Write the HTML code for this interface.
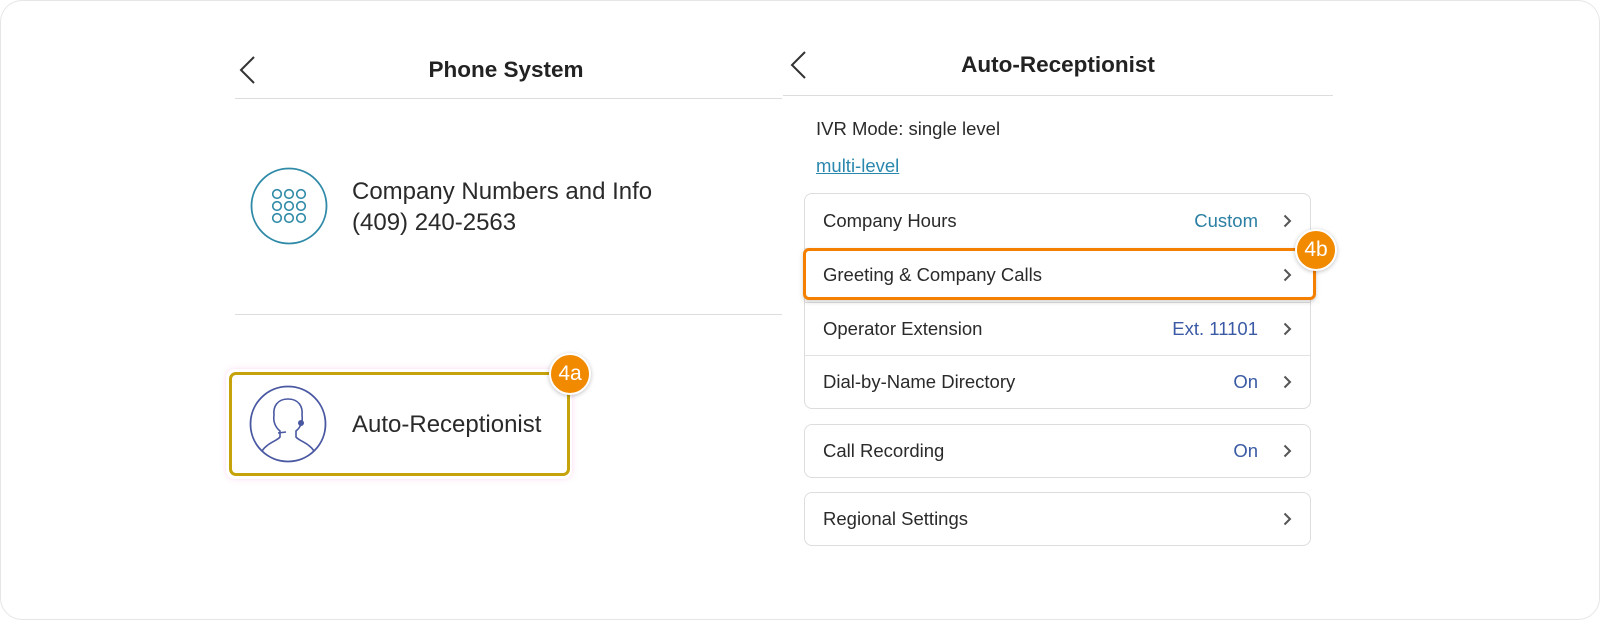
<!DOCTYPE html>
<html><head><meta charset="utf-8"><style>
*{margin:0;padding:0;box-sizing:border-box}
body{width:1600px;height:620px;background:#fff;font-family:"Liberation Sans",sans-serif;color:#222;position:relative;overflow:hidden}
.frame{position:absolute;left:0;top:0;width:1600px;height:620px;border:1px solid #e6e6e6;border-radius:22px}
.a{position:absolute}
.t{position:absolute;white-space:nowrap}
.hl{position:absolute;height:1px;background:#ddd}
.card{position:absolute;left:804px;width:507px;border:1px solid #ddd;border-radius:8px;background:#fff}
.row{position:absolute;left:0;right:0;height:54px}
.row .l{position:absolute;left:18px;top:50%;transform:translateY(-50%);font-size:18.5px;color:#2a2a2a}
.row .v{position:absolute;right:52px;top:50%;transform:translateY(-50%);font-size:18.5px;color:#2a7fa3}
.row svg{position:absolute;right:18px;top:50%;margin-top:-7px}
.sep{position:absolute;left:0;right:0;height:1px;background:#e2e2e2}
.badge{position:absolute;width:42px;height:42px;border-radius:50%;background:#f28a00;border:2px solid #fff;color:#fff;font-size:21px;text-align:center;line-height:38px;box-shadow:0 1px 4px rgba(0,0,0,.25)}
</style></head><body>
<div class="frame"></div>

<!-- Left panel -->
<svg class="a" style="left:236px;top:54px" width="22" height="32"><path d="M18 3 L5 16 L18 29" fill="none" stroke="#333" stroke-width="2"/></svg>
<div class="t" style="left:0;width:1012px;text-align:center;top:57px;font-size:22.5px;font-weight:bold;color:#222">Phone System</div>
<div class="hl" style="left:235px;top:98px;width:547px"></div>

<svg class="a" style="left:250px;top:167px" width="78" height="78">
<circle cx="39" cy="39" r="37.5" fill="none" stroke="#2f8aa8" stroke-width="1.8"/>
<g fill="none" stroke="#2f8aa8" stroke-width="1.6">
<circle cx="27" cy="27" r="4.3"/><circle cx="39" cy="27" r="4.3"/><circle cx="51" cy="27" r="4.3"/>
<circle cx="27" cy="39" r="4.3"/><circle cx="39" cy="39" r="4.3"/><circle cx="51" cy="39" r="4.3"/>
<circle cx="27" cy="51" r="4.3"/><circle cx="39" cy="51" r="4.3"/><circle cx="51" cy="51" r="4.3"/>
</g></svg>
<div class="t" style="left:352px;top:176px;font-size:24px;line-height:31px;color:#2a2a2a">Company Numbers and Info<br>(409) 240-2563</div>
<div class="hl" style="left:235px;top:314px;width:547px"></div>

<div class="a" style="left:226px;top:369px;width:346px;height:110px;border-radius:9px;box-shadow:0 0 6px rgba(240,150,220,.35)"></div>
<div class="a" style="left:229px;top:372px;width:341px;height:104px;border:3.5px solid #c6a30a;border-radius:7px;background:#fff"></div>
<svg class="a" style="left:249px;top:385px" width="78" height="78">
<circle cx="39" cy="39" r="37.5" fill="none" stroke="#4a58a2" stroke-width="1.8"/>
<path d="M13 66 C18 58 28 56 31 52 L31 46 C26 42 24 36 25 30 C24 22 28 14 39 14 C50 14 54 22 53 30 C54 36 52 42 47 46 L47 52 C50 56 60 58 65 66" fill="none" stroke="#4a58a2" stroke-width="1.6"/>
<path d="M29 48 L37 47" stroke="#4a58a2" stroke-width="1.5"/>
<circle cx="52" cy="38" r="3" fill="#4a58a2"/>
</svg>
<div class="t" style="left:352px;top:411px;font-size:24px;color:#2a2a2a">Auto-Receptionist</div>
<div class="badge" style="left:549px;top:353px">4a</div>

<!-- Right panel -->
<svg class="a" style="left:787px;top:49px" width="22" height="32"><path d="M18 3 L5 16 L18 29" fill="none" stroke="#333" stroke-width="2"/></svg>
<div class="t" style="left:783px;width:550px;text-align:center;top:52px;font-size:22.5px;font-weight:bold;color:#222">Auto-Receptionist</div>
<div class="hl" style="left:783px;top:95px;width:550px"></div>
<div class="t" style="left:816px;top:118px;font-size:18.5px;color:#2a2a2a">IVR Mode: single level</div>
<div class="t" style="left:816px;top:155px;font-size:18.5px;color:#2a88ae;text-decoration:underline">multi-level</div>

<div class="card" style="top:193px;height:216px">
 <div class="row" style="top:0"><span class="l">Company Hours</span><span class="v">Custom</span><svg width="9" height="14"><path d="M1.5 1.5 L7 7 L1.5 12.5" fill="none" stroke="#555" stroke-width="2"/></svg></div>
 <div class="sep" style="top:54px"></div>
 <div class="row" style="top:54px"><span class="l">Greeting &amp; Company Calls</span></div>
 <div class="sep" style="top:108px"></div>
 <div class="row" style="top:108px"><span class="l">Operator Extension</span><span class="v" style="color:#3a5aa5">Ext. 11101</span><svg width="9" height="14"><path d="M1.5 1.5 L7 7 L1.5 12.5" fill="none" stroke="#555" stroke-width="2"/></svg></div>
 <div class="sep" style="top:161px"></div>
 <div class="row" style="top:161px"><span class="l">Dial-by-Name Directory</span><span class="v" style="color:#3a5aa5">On</span><svg width="9" height="14"><path d="M1.5 1.5 L7 7 L1.5 12.5" fill="none" stroke="#555" stroke-width="2"/></svg></div>
</div>

<div class="a" style="left:803px;top:248px;width:513px;height:52px;border:3px solid #f57f00;border-radius:6px;background:#fff;box-shadow:0 2px 5px rgba(0,0,0,.18)">
 <div class="t" style="left:17px;top:13px;font-size:18.5px;color:#2a2a2a">Greeting &amp; Company Calls</div>
 <svg class="a" style="right:21px;top:17px" width="9" height="14"><path d="M1.5 1.5 L7 7 L1.5 12.5" fill="none" stroke="#555" stroke-width="2"/></svg>
</div>
<div class="badge" style="left:1295px;top:229px">4b</div>

<div class="card" style="top:424px;height:54px">
 <div class="row" style="top:0;height:52px"><span class="l">Call Recording</span><span class="v" style="color:#3a5aa5">On</span><svg width="9" height="14"><path d="M1.5 1.5 L7 7 L1.5 12.5" fill="none" stroke="#555" stroke-width="2"/></svg></div>
</div>
<div class="card" style="top:492px;height:54px">
 <div class="row" style="top:0;height:52px"><span class="l">Regional Settings</span><svg width="9" height="14"><path d="M1.5 1.5 L7 7 L1.5 12.5" fill="none" stroke="#555" stroke-width="2"/></svg></div>
</div>
</body></html>
